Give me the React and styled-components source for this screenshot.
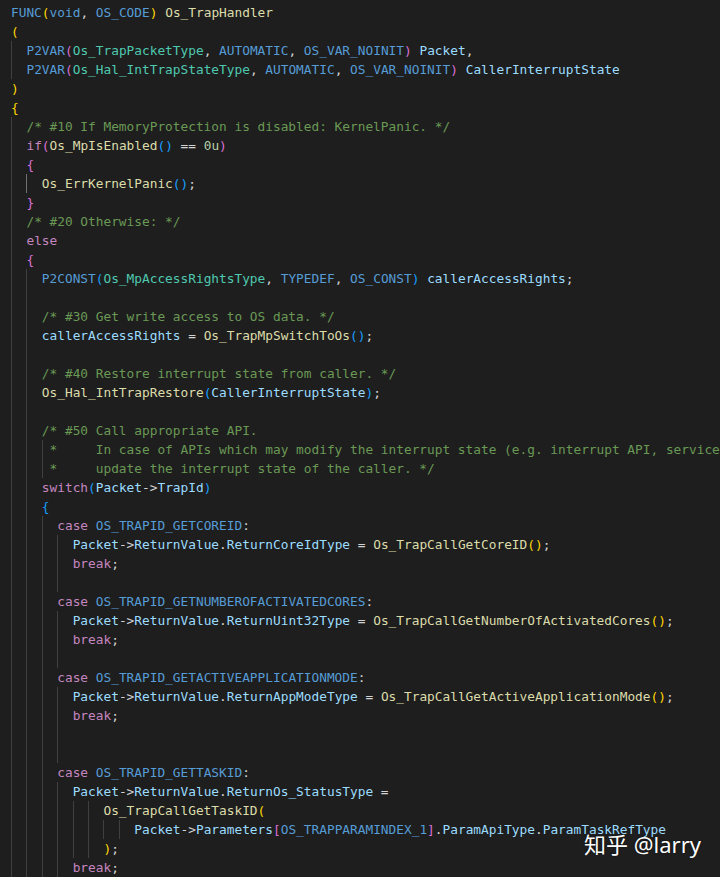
import React from "react";
import styled, { createGlobalStyle, css } from "styled-components";

const GlobalStyle = createGlobalStyle`
  html, body { margin: 0; padding: 0; background: #1e1e1e; }
`;

const COL = 7.7;
const LEFT = 11;
const GUIDE = "#404040";
const GUIDE_ACTIVE = "#707070";

const COLORS = {
  p: "#d4d4d4",
  m: "#569cd6",
  f: "#dcdcaa",
  t: "#4ec9b0",
  v: "#9cdcfe",
  c: "#6a9955",
  k: "#c586c0",
  n: "#b5cea8",
  b1: "#ffd700",
  b2: "#da70d6",
  b3: "#179fff",
};

const Editor = styled.div`
  position: relative;
  width: 720px;
  height: 877px;
  box-sizing: border-box;
  padding-top: 3px;
  overflow: hidden;
  background: #1e1e1e;
  color: #d4d4d4;
  font-family: "DejaVu Sans Mono", "Liberation Mono", monospace;
  font-size: 12.8px;
`;

const guideLayers = ({ $guides, $active }) => {
  const imgs = [];
  const pos = [];
  const size = [];
  for (let k = 0; k < $guides; k++) {
    const c = k === $active ? GUIDE_ACTIVE : GUIDE;
    imgs.push(`linear-gradient(${c}, ${c})`);
    pos.push(`${Math.round(LEFT + 2 * COL * k)}px 0`);
    size.push("1px 100%");
  }
  if (!imgs.length) return css`background-image: none;`;
  return css`
    background-image: ${imgs.join(", ")};
    background-position: ${pos.join(", ")};
    background-size: ${size.join(", ")};
    background-repeat: no-repeat;
  `;
};

const Line = styled.div`
  height: 19px;
  line-height: 19px;
  padding-left: ${LEFT}px;
  white-space: pre;
  ${guideLayers}
`;

const Tok = styled.span`
  color: ${({ $k }) => COLORS[$k] || COLORS.p};
`;

const Watermark = styled.div`
  position: absolute;
  right: 19px;
  bottom: 20px;
  color: #ffffff;
  font-family: "Noto Sans", "Noto Sans CJK SC", sans-serif;
  font-size: 22px;
  line-height: 26px;
  white-space: pre;
  text-shadow: 0 0 2px rgba(0, 0, 0, 0.6);
`;

const SOURCE = [
  "«m:FUNC»«b1:(»«m:void», «m:OS_CODE»«b1:)» «f:Os_TrapHandler»",
  "«b1:(»",
  "  «m:P2VAR»«b2:(»«t:Os_TrapPacketType», «m:AUTOMATIC», «m:OS_VAR_NOINIT»«b2:)» «v:Packet»,",
  "  «m:P2VAR»«b2:(»«t:Os_Hal_IntTrapStateType», «m:AUTOMATIC», «m:OS_VAR_NOINIT»«b2:)» «v:CallerInterruptState»",
  "«b1:)»",
  "«b1:{»",
  "  «c:/* #10 If MemoryProtection is disabled: KernelPanic. */»",
  "  «k:if»«b2:(»«f:Os_MpIsEnabled»«b3:()» == «n:0u»«b2:)»",
  "  «b2:{»",
  "    «f:Os_ErrKernelPanic»«b3:()»;",
  "  «b2:}»",
  "  «c:/* #20 Otherwise: */»",
  "  «k:else»",
  "  «b2:{»",
  "    «m:P2CONST»«b3:(»«t:Os_MpAccessRightsType», «m:TYPEDEF», «m:OS_CONST»«b3:)» «v:callerAccessRights»;",
  "",
  "    «c:/* #30 Get write access to OS data. */»",
  "    «v:callerAccessRights» = «f:Os_TrapMpSwitchToOs»«b3:()»;",
  "",
  "    «c:/* #40 Restore interrupt state from caller. */»",
  "    «f:Os_Hal_IntTrapRestore»«b3:(»«v:CallerInterruptState»«b3:)»;",
  "",
  "    «c:/* #50 Call appropriate API.»",
  "     «c:*     In case of APIs which may modify the interrupt state (e.g. interrupt API, service APIs),»",
  "     «c:*     update the interrupt state of the caller. */»",
  "    «k:switch»«b3:(»«v:Packet»->«v:TrapId»«b3:)»",
  "    «b3:{»",
  "      «k:case» «m:OS_TRAPID_GETCOREID»:",
  "        «v:Packet»->«v:ReturnValue».«v:ReturnCoreIdType» = «f:Os_TrapCallGetCoreID»«b1:()»;",
  "        «k:break»;",
  "",
  "      «k:case» «m:OS_TRAPID_GETNUMBEROFACTIVATEDCORES»:",
  "        «v:Packet»->«v:ReturnValue».«v:ReturnUint32Type» = «f:Os_TrapCallGetNumberOfActivatedCores»«b1:()»;",
  "        «k:break»;",
  "",
  "      «k:case» «m:OS_TRAPID_GETACTIVEAPPLICATIONMODE»:",
  "        «v:Packet»->«v:ReturnValue».«v:ReturnAppModeType» = «f:Os_TrapCallGetActiveApplicationMode»«b1:()»;",
  "        «k:break»;",
  "",
  "",
  "      «k:case» «m:OS_TRAPID_GETTASKID»:",
  "        «v:Packet»->«v:ReturnValue».«v:ReturnOs_StatusType» =",
  "            «f:Os_TrapCallGetTaskID»«b1:(»",
  "                «v:Packet»->«v:Parameters»«b2:[»«m:OS_TRAPPARAMINDEX_1»«b2:]».«v:ParamApiType».«v:ParamTaskRefType»",
  "            «b1:)»;",
  "        «k:break»;",
];

const ACTIVE = { 9: 1 };

function tokenize(src) {
  const out = [];
  const re = /«(\w+):([^»]*)»/g;
  let last = 0;
  let m;
  while ((m = re.exec(src))) {
    if (m.index > last) out.push(["p", src.slice(last, m.index)]);
    out.push([m[1], m[2]]);
    last = re.lastIndex;
  }
  if (last < src.length) out.push(["p", src.slice(last)]);
  return out;
}

const indentOf = (s) => (s.length ? s.match(/^ */)[0].length : -1);

function buildLines() {
  const ind = SOURCE.map(indentOf);
  const guides = ind.map((v, i) => {
    if (v >= 0) return Math.ceil(v / 2);
    let a = 0;
    let b = 0;
    for (let j = i - 1; j >= 0; j--) if (ind[j] >= 0) { a = ind[j]; break; }
    for (let j = i + 1; j < ind.length; j++) if (ind[j] >= 0) { b = ind[j]; break; }
    return Math.ceil(Math.max(a, b) / 2);
  });
  return SOURCE.map((s, i) => ({ toks: tokenize(s), guides: guides[i], active: ACTIVE[i] }));
}

const LINES = buildLines();

export default function App() {
  return (
    <>
      <GlobalStyle />
      <Editor>
        {LINES.map((ln, i) => (
          <Line key={i} $guides={ln.guides} $active={ln.active}>
            {ln.toks.length ? ln.toks.map(([k, t], j) => (
              <Tok key={j} $k={k}>{t}</Tok>
            )) : " "}
          </Line>
        ))}
        <Watermark>知乎 @larry</Watermark>
      </Editor>
    </>
  );
}
